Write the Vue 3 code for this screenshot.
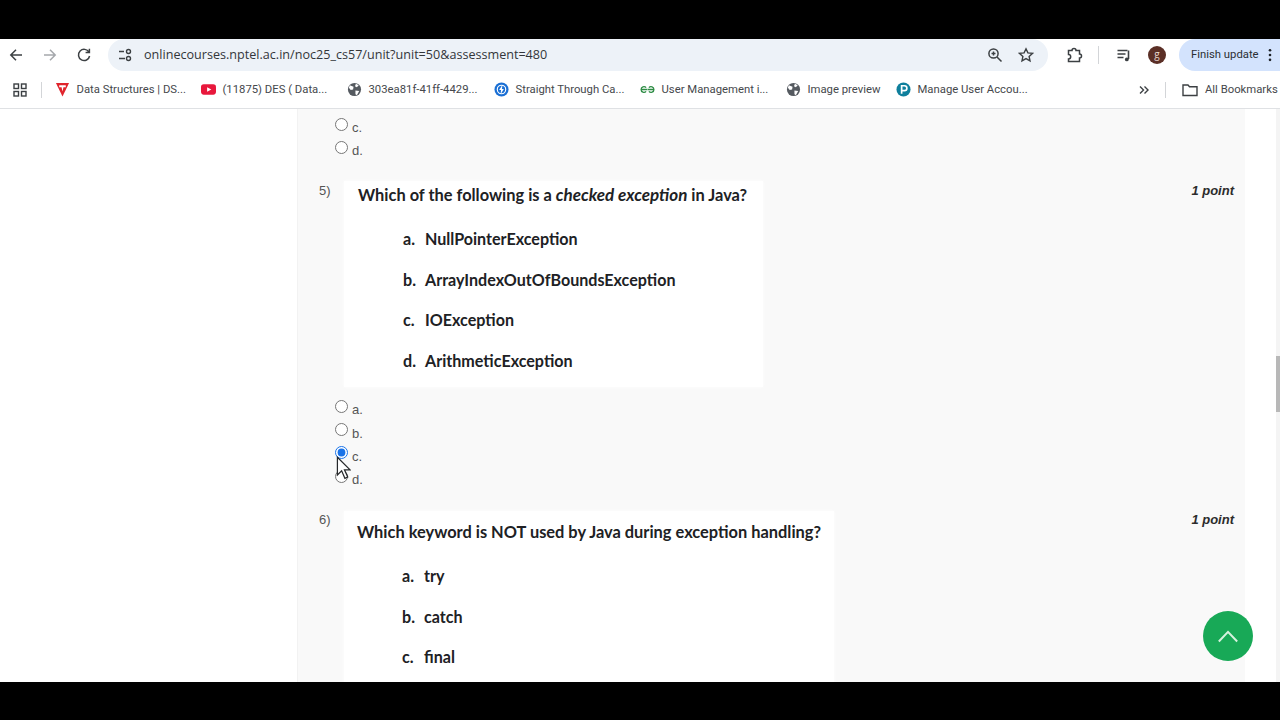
<script setup>
const bookmarks = [
  { icon: 'tri', label: 'Data Structures | DS...' },
  { icon: 'yt', label: '(11875) DES ( Data...' },
  { icon: 'globe', label: '303ea81f-41ff-4429...' },
  { icon: 'blue', label: 'Straight Through Ca...' },
  { icon: 'gfg', label: 'User Management i...' },
  { icon: 'globe', label: 'Image preview' },
  { icon: 'p', label: 'Manage User Accou...' },
]

const q5Options = [
  { letter: 'a.', text: 'NullPointerException' },
  { letter: 'b.', text: 'ArrayIndexOutOfBoundsException' },
  { letter: 'c.', text: 'IOException' },
  { letter: 'd.', text: 'ArithmeticException' },
]

const q6Options = [
  { letter: 'a.', text: 'try' },
  { letter: 'b.', text: 'catch' },
  { letter: 'c.', text: 'final' },
]
</script>

<template>
  <div class="screen">
    <div class="black black--top"></div>

    <header class="toolbar">
      <div class="nav">
        <svg class="ic" viewBox="0 0 16 16"><path d="M14 8H3M8 2.8 2.8 8 8 13.2" fill="none" stroke="#3c4043" stroke-width="1.5" /></svg>
        <svg class="ic" viewBox="0 0 16 16"><path d="M2 8h11M8 2.8 13.2 8 8 13.2" fill="none" stroke="#a5a8ac" stroke-width="1.5" /></svg>
        <svg class="ic" viewBox="0 0 16 16"><path d="M13 5.2A5.6 5.6 0 1 0 13.6 9M13.4 1.8v3.800H9.600" fill="none" stroke="#3c4043" stroke-width="1.5" /></svg>
      </div>
      <div class="omnibox">
        <svg class="ic ic--tune" viewBox="0 0 16 16">
          <path d="M2 4.500h5M2 11.500h6" stroke="#3c4043" stroke-width="1.5" fill="none" />
          <circle cx="11.500" cy="4.500" r="2" fill="none" stroke="#3c4043" stroke-width="1.400" />
          <circle cx="11.500" cy="11.500" r="2" fill="none" stroke="#3c4043" stroke-width="1.400" />
        </svg>
        <span class="url">onlinecourses.nptel.ac.in/noc25_cs57/unit?unit=50&amp;assessment=480</span>
        <svg class="ic ic--zoom" viewBox="0 0 16 16">
          <circle cx="6.500" cy="6.500" r="4.600" fill="none" stroke="#3c4043" stroke-width="1.5" />
          <path d="M10 10l4.500 4.500M4.500 6.500h4M6.500 4.500v4" stroke="#3c4043" stroke-width="1.5" fill="none" />
        </svg>
        <svg class="ic ic--star" viewBox="0 0 16 16"><path d="M8 1.800l1.900 4.100 4.500.5-3.300 3 .9 4.400L8 11.600l-4 2.200.9-4.400-3.300-3 4.500-.5z" fill="none" stroke="#3c4043" stroke-width="1.400" /></svg>
      </div>
      <svg class="ic ic--ext" viewBox="0 0 18 18"><path d="M3.500 4.500H7a2 2 0 0 1 4 0h3.500V8a2 2 0 0 1 0 4v3.500h-11V13a2.200 2.200 0 0 0 0-4.400z" fill="none" stroke="#3c4043" stroke-width="1.500" /></svg>
      <span class="divider divider--bar"></span>
      <svg class="ic ic--queue" viewBox="0 0 16 16">
        <path d="M1.500 3.500h10M1.500 7h8M1.500 10.500h6" stroke="#3c4043" stroke-width="1.400" fill="none" />
        <path d="M12.500 3.500v8.500" stroke="#3c4043" stroke-width="1.600" fill="none" />
        <circle cx="10.800" cy="12.400" r="1.900" fill="#3c4043" />
      </svg>
      <span class="avatar">g</span>
      <div class="update">
        <span>Finish update</span>
        <svg class="kebab" viewBox="0 0 4 16"><circle cx="2" cy="2.500" r="1.500" /><circle cx="2" cy="8" r="1.500" /><circle cx="2" cy="13.500" r="1.500" /></svg>
      </div>
    </header>

    <nav class="bookmarks">
      <svg class="apps" viewBox="0 0 14 14">
        <g fill="none" stroke="#3c4043" stroke-width="1.400">
          <rect x="1" y="1" width="4.500" height="4.500" />
          <rect x="8.500" y="1" width="4.500" height="4.500" />
          <rect x="1" y="8.500" width="4.500" height="4.500" />
          <rect x="8.500" y="8.500" width="4.500" height="4.500" />
        </g>
      </svg>
      <span class="divider divider--first"></span>
      <div class="bm-list">
        <div v-for="b in bookmarks" :key="b.label" class="bm">
          <svg class="fav" viewBox="0 0 16 16">
            <template v-if="b.icon === 'tri'">
              <path d="M1 1h14L8 15.500z" fill="#e0242c" />
              <path d="M4.500 3.500h7v2H9L8 10 7 5.500H4.500z" fill="#fff" />
            </template>
            <template v-else-if="b.icon === 'yt'">
              <rect x="0" y="2.500" width="16" height="11" rx="3" fill="#e8183c" />
              <path d="M6.500 5.500 11 8l-4.500 2.500z" fill="#fff" />
            </template>
            <template v-else-if="b.icon === 'globe'">
              <circle cx="8" cy="8" r="7" fill="#555a60" />
              <path d="M3 3.500 7 5 6.500 8 4 8.500 2 6zM9 9l4 .5-2.500 4.500L9 13zM9.500 1.800l3 1.700-2 2-2-1z" fill="#fff" />
            </template>
            <template v-else-if="b.icon === 'blue'">
              <circle cx="8" cy="8" r="7.500" fill="#1a6fd4" />
              <circle cx="8" cy="8" r="4.500" fill="none" stroke="#fff" stroke-width="1.200" />
              <path d="M9 3 5.500 8.500h2L7 13l3.500-5.500h-2z" fill="#fff" />
            </template>
            <template v-else-if="b.icon === 'gfg'">
              <g fill="none" stroke="#2f8d46" stroke-width="1.400">
                <path d="M7.800 8H1.200a3 3 0 0 1 5.300-2M1.200 8a3 3 0 0 0 5.300 2" />
                <path d="M8.200 8h6.600a3 3 0 0 0-5.300-2M14.800 8a3 3 0 0 1-5.300 2" />
              </g>
            </template>
            <template v-else>
              <circle cx="8" cy="8" r="7.500" fill="#0f7f9c" />
              <path d="M6 12.500V4h3a2.500 2.500 0 0 1 0 5.200H6" fill="none" stroke="#fff" stroke-width="1.800" />
            </template>
          </svg>
          <span>{{ b.label }}</span>
        </div>
      </div>
      <svg class="chev" viewBox="0 0 12 12"><path d="M2 2.500 5.500 6 2 9.500M6.500 2.500 10 6l-3.500 3.500" fill="none" stroke="#3c4043" stroke-width="1.400" /></svg>
      <span class="divider divider--last"></span>
      <svg class="folder" viewBox="0 0 16 14"><path d="M1 2h5l1.500 1.700H15V12.500H1z" fill="none" stroke="#3c4043" stroke-width="1.400" /></svg>
      <span class="bm-all">All Bookmarks</span>
    </nav>

    <div class="page">
      <aside class="side"></aside>
      <main class="panel">
        <div class="opts opts--prev">
          <label class="opt"><input type="radio" name="q4" /><span>c.</span></label>
          <label class="opt"><input type="radio" name="q4" /><span>d.</span></label>
        </div>

        <section class="question q5">
          <span class="qno">5)</span>
          <div class="qimg qimg--5">
            <p class="qtext">Which of the following is a <em>checked exception</em> in Java?</p>
            <ol class="qlist">
              <li v-for="o in q5Options" :key="o.letter"><b>{{ o.letter }}</b>{{ o.text }}</li>
            </ol>
          </div>
          <span class="points">1 point</span>
        </section>

        <div class="opts opts--q5">
          <label class="opt"><input type="radio" name="q5" /><span>a.</span></label>
          <label class="opt"><input type="radio" name="q5" /><span>b.</span></label>
          <label class="opt"><input type="radio" name="q5" checked /><span>c.</span></label>
          <label class="opt"><input type="radio" name="q5" /><span>d.</span></label>
          <svg class="cursor" viewBox="0 0 16 25">
            <path d="M1.500 1v19l4.500-4.500 3.500 8 3-1.400-3.500-7.600H15z" fill="#fff" stroke="#26282b" stroke-width="1.300" />
          </svg>
        </div>

        <section class="question q6">
          <span class="qno">6)</span>
          <div class="qimg qimg--6">
            <p class="qtext">Which keyword is NOT used by Java during exception handling?</p>
            <ol class="qlist">
              <li v-for="o in q6Options" :key="o.letter"><b>{{ o.letter }}</b>{{ o.text }}</li>
            </ol>
          </div>
          <span class="points">1 point</span>
        </section>
      </main>
      <div class="gutter"></div>
      <div class="scrollbar"><span class="thumb"></span></div>

      <button type="button" class="to-top" aria-label="Back to top">
        <svg viewBox="0 0 24 14"><path d="M2 12.500 12 2l10 10.500" fill="none" stroke="#d6f2df" stroke-width="2.200" /></svg>
      </button>
    </div>

    <div class="black black--bottom"></div>
  </div>
</template>

<style>
html,
body {
  margin: 0;
  background: #000;
}
</style>

<style scoped>
.screen {
  width: 1280px;
  height: 720px;
  display: flex;
  flex-direction: column;
  overflow: hidden;
  background: #fff;
  font-family: 'Open Sans', 'Liberation Sans', sans-serif;
  color: #3c4043;
}

.black {
  background: #000;
  flex: none;
}

.black--top {
  height: 39px;
}

.black--bottom {
  height: 38px;
}

.toolbar {
  flex: none;
  height: 32px;
  display: flex;
  align-items: center;
  background: #fff;
}

.nav {
  display: flex;
  align-items: center;
  gap: 18px;
  padding-left: 8px;
  width: 100px;
  box-sizing: border-box;
}

.ic {
  width: 16px;
  height: 16px;
  flex: none;
}

.omnibox {
  width: 940px;
  height: 32px;
  margin-left: 8px;
  flex: none;
  display: flex;
  align-items: center;
  background: #edf2f8;
  border-radius: 16px;
  box-sizing: border-box;
  padding: 0 14px 0 9px;
}

.url {
  margin-left: 11px;
  margin-top: -2px;
  font-size: 12.600px;
  color: #33363a;
  white-space: nowrap;
  flex: 1;
}

.ic--zoom {
  margin-right: 15px;
}

.ic--ext {
  width: 18px;
  height: 18px;
  margin-left: 17px;
}

.divider {
  flex: none;
  width: 1px;
  background: #d3d5d8;
}

.divider--bar {
  height: 18px;
  margin-left: 15px;
}

.ic--queue {
  margin-left: 17px;
}

.avatar {
  flex: none;
  width: 18px;
  height: 18px;
  margin-left: 16px;
  border-radius: 50%;
  background: #5b2f26;
  color: #e8d6cf;
  font-size: 10px;
  line-height: 17px;
  text-align: center;
}

.update {
  margin-left: 13px;
  flex: 1;
  height: 32px;
  display: flex;
  align-items: center;
  gap: 9px;
  padding-left: 12px;
  border-radius: 16px 0 0 16px;
  background: #d3e3fd;
  font-family: Roboto, 'Open Sans', sans-serif;
  font-size: 11.300px;
  color: #2b2f33;
  white-space: nowrap;
}

.update span {
  margin-top: -2px;
}

.kebab {
  width: 4px;
  height: 14px;
  fill: #1f2328;
}

.bookmarks {
  flex: none;
  height: 37px;
  display: flex;
  align-items: center;
  background: #fff;
  border-bottom: 1px solid #dfe1e4;
  font-family: Roboto, 'Open Sans', sans-serif;
  font-size: 11.300px;
  color: #45484c;
  white-space: nowrap;
}

.apps {
  width: 14px;
  height: 14px;
  margin-left: 13px;
  flex: none;
}

.divider--first {
  height: 16px;
  margin-left: 14px;
}

.bm-list {
  display: grid;
  grid-template-columns: 146px 146px 147px 146px 146px 110px 235px;
  margin-left: 13px;
}

.bm {
  display: flex;
  align-items: center;
  gap: 6.500px;
}

.fav {
  width: 15px;
  height: 15px;
  flex: none;
}

.chev {
  width: 12px;
  height: 12px;
  flex: none;
  margin-left: 7px;
}

.divider--last {
  height: 16px;
  margin-left: 15px;
}

.folder {
  width: 16px;
  height: 14px;
  flex: none;
  margin-left: 16px;
}

.bm-all {
  margin-left: 7px;
}

.page {
  position: relative;
  flex: 1;
  min-height: 0;
  display: flex;
  overflow: hidden;
  background: #fff;
}

.side {
  width: 297px;
  flex: none;
}

.panel {
  width: 948px;
  flex: none;
  box-sizing: border-box;
  padding: 8px 11px 0 21px;
  background: #f9f9f9;
  border-left: 1px solid #f2f2f2;
  overflow: hidden;
}

.gutter {
  width: 31px;
  flex: none;
}

.scrollbar {
  flex: 1;
  background: #f4f4f4;
}

.thumb {
  display: block;
  height: 56px;
  margin-top: 247px;
  background: #b8b8b8;
}

.opts {
  position: relative;
  display: flex;
  flex-direction: column;
  gap: 5.300px;
  padding-left: 15.500px;
}

.opt {
  display: flex;
  align-items: center;
  height: 18px;
  gap: 4.500px;
  font-family: 'Liberation Sans', Arial, sans-serif;
  font-size: 13px;
  color: #555;
}

.opt input {
  width: 13px;
  height: 13px;
  margin: -4px 0 0;
  accent-color: #1a73e8;
}

.opt span {
  padding-top: 3px;
}

.question {
  display: flex;
  align-items: flex-start;
}

.q5 {
  margin-top: 23px;
}

.q6 {
  margin-top: 23px;
}

.qno {
  width: 25px;
  flex: none;
  padding-top: 2px;
  font-family: 'Liberation Sans', Arial, sans-serif;
  font-size: 13px;
  color: #555;
}

.qimg {
  flex: none;
  background: #fff;
  box-shadow: 0 0 3px #fff;
  font-family: Lato, 'Open Sans', sans-serif;
  color: #202124;
  box-sizing: border-box;
  padding: 4px 14px 0;
}

.qimg--5 {
  width: 419px;
  height: 206px;
}

.qimg--6 {
  width: 490px;
  height: 180px;
  margin-top: 1px;
  padding-top: 11px;
  padding-left: 13px;
}

.qtext {
  margin: 0;
  font-size: 16.400px;
  line-height: 20px;
  font-weight: 700;
  white-space: nowrap;
}

.qtext em {
  font-size: 17px;
  font-weight: 700;
}

.qlist {
  list-style: none;
  margin: 24px 0 0;
  padding: 0 0 0 45px;
  font-size: 16.100px;
  font-weight: 700;
}

.qlist li {
  height: 40.600px;
  line-height: 20px;
}

.qlist b {
  display: inline-block;
  width: 22px;
  font-weight: 700;
}

.points {
  margin-left: auto;
  padding-top: 2px;
  font-family: 'Liberation Sans', Arial, sans-serif;
  font-size: 13px;
  font-weight: 700;
  font-style: italic;
  color: #2c2c2c;
}

.opts--q5 {
  margin-top: 12px;
}

.cursor {
  position: absolute;
  left: 17px;
  top: 57px;
  width: 15px;
  height: 24px;
}

.to-top {
  position: absolute;
  left: 1203px;
  top: 502px;
  width: 50px;
  height: 50px;
  padding: 0;
  border: 0;
  border-radius: 50%;
  background: #18a957;
  display: flex;
  align-items: center;
  justify-content: center;
}

.to-top svg {
  width: 22px;
  height: 13px;
}
</style>
